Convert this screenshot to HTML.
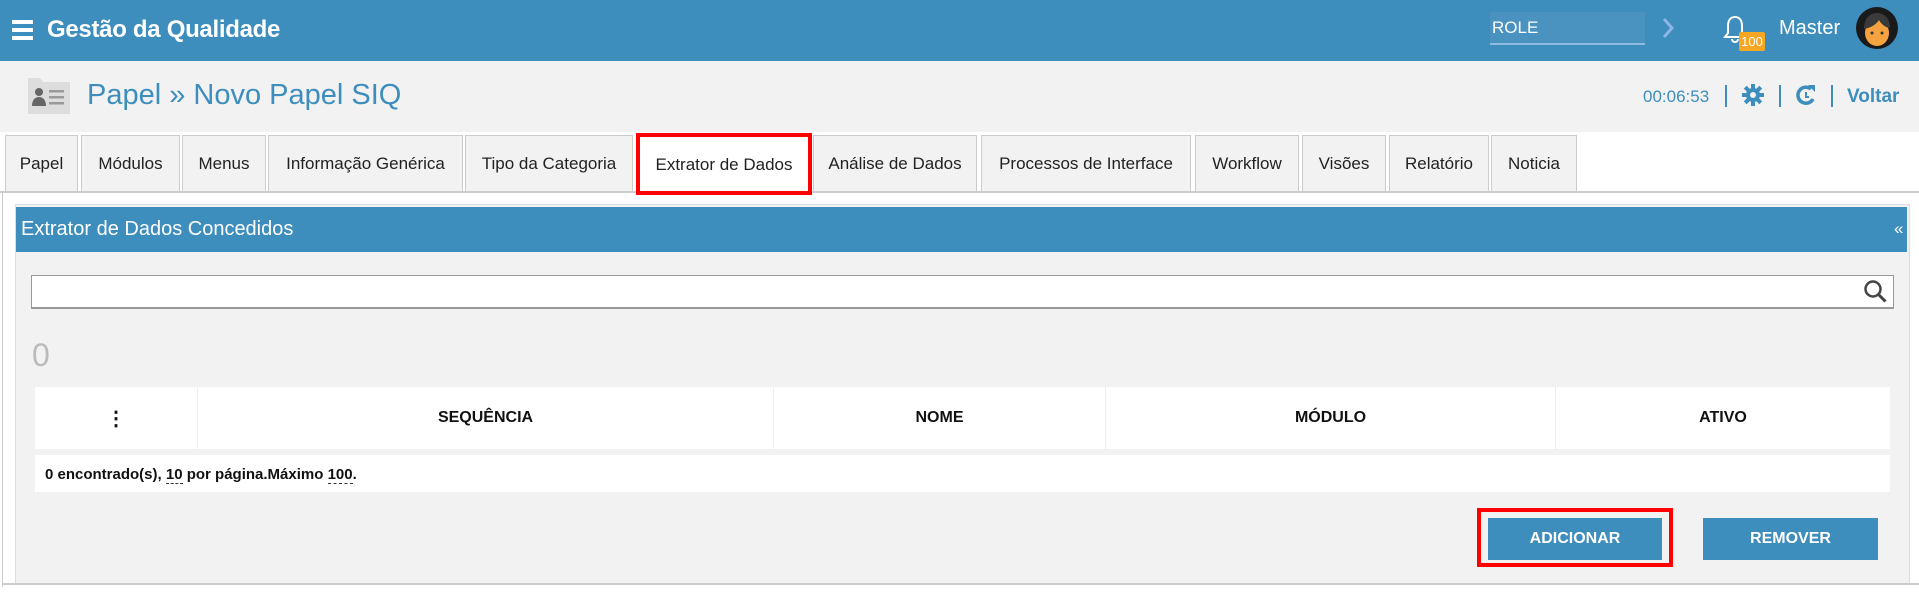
<!DOCTYPE html>
<html><head><meta charset="utf-8"><style>
*{box-sizing:border-box;margin:0;padding:0}
body{width:1919px;height:595px;overflow:hidden;background:#fff;font-family:"Liberation Sans",sans-serif;position:relative}
.a{position:absolute}
.hdr{left:0;top:0;width:1919px;height:61px;background:#3d8dbd}
.sub{left:0;top:61px;width:1919px;height:71px;background:#f2f2f2}
.tab{position:absolute;top:135px;height:57px;background:#f2f2f2;border:1px solid #ccc;border-bottom:none;font-size:17px;color:#222;display:flex;align-items:center;justify-content:center}
.th{position:absolute;top:0;height:62px;display:flex;align-items:center;justify-content:center;font-weight:bold;font-size:16px;color:#111;border-right:1px solid #eee}
.btn{position:absolute;top:518px;height:42px;background:#3d8dbd;color:#fff;font-weight:bold;font-size:16px;display:flex;align-items:center;justify-content:center}
</style></head><body>
<div class="a hdr"></div>
<div class="a" style="left:12px;top:20px;width:21px;height:4px;background:#fff"></div>
<div class="a" style="left:12px;top:28px;width:21px;height:4px;background:#fff"></div>
<div class="a" style="left:12px;top:36px;width:21px;height:4px;background:#fff"></div>
<div class="a" style="left:47px;top:16px;color:#fff;font-weight:bold;font-size:24px;letter-spacing:-0.3px">Gestão da Qualidade</div>
<div class="a" style="left:1490px;top:12px;width:155px;height:33px;background:#4a93c1;border-bottom:2px solid #8cbde0;color:#fff;font-size:17px;padding:6px 2px">ROLE</div>
<svg class="a" style="left:1661px;top:17px" width="14" height="22"><path d="M3 2l8 9-8 9" stroke="#8ab5e6" stroke-width="3" fill="none"/></svg>
<svg class="a" style="left:1722px;top:14px" width="26" height="30"><path d="M13 3c-5 0-7 4-7 9v7l-3 4h20l-3-4v-7c0-5-2-9-7-9z M10 25a3 3 0 0 0 6 0" stroke="#fff" stroke-width="2" fill="none"/></svg>
<div class="a" style="left:1739px;top:32px;width:26px;height:19px;background:#f5a623;color:#fff;font-size:13px;text-align:center;line-height:19px;border-radius:2px">100</div>
<div class="a" style="left:1779px;top:17px;color:#fff;font-size:20px">Master</div>
<svg class="a" style="left:1855px;top:6px" width="44" height="44"><circle cx="22" cy="22" r="21" fill="#1a1a1a"/><ellipse cx="22" cy="27" rx="12" ry="13" fill="#f4a340"/><path d="M9 23c0-11 6-16 13-16s13 5 13 15c-4 0-9-4-11-8-3 5-9 8-15 9z" fill="#3a3a3a"/><circle cx="17" cy="27" r="1.5" fill="#333"/><circle cx="27" cy="27" r="1.5" fill="#333"/></svg>
<div class="a sub"></div>
<svg class="a" style="left:25px;top:76px" width="48" height="40"><path d="M3 2h12l3 4h27v32H3z" fill="#ddd"/><circle cx="14" cy="16" r="4" fill="#666"/><path d="M7 30c0-6 3-9 7-9s7 3 7 9z" fill="#666"/><rect x="24" y="14" width="15" height="2.5" fill="#999"/><rect x="24" y="20" width="15" height="2.5" fill="#999"/><rect x="24" y="26" width="15" height="2.5" fill="#999"/></svg>
<div class="a" style="left:87px;top:79px;color:#3d8dbd;font-size:29px">Papel » Novo Papel SIQ</div>
<div class="a" style="left:1643px;top:87px;color:#3d8dbd;font-size:17px">00:06:53</div>
<div class="a" style="left:1725px;top:85px;width:2px;height:22px;background:#3d8dbd"></div>
<div class="a" style="left:1779px;top:85px;width:2px;height:22px;background:#3d8dbd"></div>
<div class="a" style="left:1831px;top:85px;width:2px;height:22px;background:#3d8dbd"></div>
<svg class="a" style="left:1742px;top:84px" width="22" height="22" viewBox="0 0 22 22"><g fill="#3d8dbd"><circle cx="11" cy="11" r="7"/><rect x="9" y="0" width="4" height="22"/><rect x="0" y="9" width="22" height="4"/><rect x="9" y="0" width="4" height="22" transform="rotate(45 11 11)"/><rect x="9" y="0" width="4" height="22" transform="rotate(-45 11 11)"/></g><circle cx="11" cy="11" r="3" fill="#f2f2f2"/></svg>
<svg class="a" style="left:1795px;top:84px" width="22" height="24"><path d="M16 5a8 8 0 1 0 2 10" stroke="#3d8dbd" stroke-width="3.5" fill="none"/><path d="M13 1h7v7z" fill="#3d8dbd"/><path d="M11 8v5h3" stroke="#3d8dbd" stroke-width="2" fill="none"/></svg>
<div class="a" style="left:1847px;top:86px;color:#3d8dbd;font-size:19px;font-weight:bold">Voltar</div>
<div class="tab" style="left:5px;width:73px">Papel</div>
<div class="tab" style="left:81px;width:99px">Módulos</div>
<div class="tab" style="left:182px;width:84px">Menus</div>
<div class="tab" style="left:268px;width:195px">Informação Genérica</div>
<div class="tab" style="left:465px;width:168px">Tipo da Categoria</div>
<div class="tab" style="left:636px;top:133px;height:62px;width:176px;background:#fff;border:4px solid #f00;align-items:flex-start;padding-top:18px">Extrator de Dados</div>
<div class="tab" style="left:813px;width:164px">Análise de Dados</div>
<div class="tab" style="left:981px;width:210px">Processos de Interface</div>
<div class="tab" style="left:1195px;width:104px">Workflow</div>
<div class="tab" style="left:1302px;width:84px">Visões</div>
<div class="tab" style="left:1389px;width:100px">Relatório</div>
<div class="tab" style="left:1491px;width:86px">Noticia</div>
<div class="a" style="left:0;top:191px;width:636px;height:2px;background:#ccc"></div>
<div class="a" style="left:812px;top:191px;width:1107px;height:2px;background:#ccc"></div>
<div class="a" style="left:2px;top:192px;width:1px;height:395px;background:#ccc"></div>
<div class="a" style="left:15px;top:204px;width:1895px;height:380px;background:#f2f2f2;border:1px solid #ddd"></div>
<div class="a" style="left:3px;top:583px;width:1916px;height:2px;background:#ccc"></div>
<div class="a" style="left:16px;top:207px;width:1891px;height:45px;background:#3d8dbd;color:#fff;font-size:20px;padding:11px 5px">Extrator de Dados Concedidos</div>
<div class="a" style="left:1894px;top:219px;color:#fff;font-size:17px">«</div>
<div class="a" style="left:31px;top:275px;width:1863px;height:34px;background:#fff;border:1px solid #999;border-bottom:2px solid #999"></div>
<svg class="a" style="left:1863px;top:279px" width="26" height="26"><circle cx="10" cy="10" r="7.5" stroke="#444" stroke-width="2.5" fill="none"/><path d="M15.5 15.5l7 7" stroke="#444" stroke-width="3"/></svg>
<div class="a" style="left:32px;top:337px;color:#bbb;font-size:32px">0</div>
<div class="a" style="left:35px;top:387px;width:1855px;height:62px;background:#fff">
<div class="th" style="left:0;width:163px;font-size:20px">⋮</div>
<div class="th" style="left:163px;width:576px">SEQUÊNCIA</div>
<div class="th" style="left:739px;width:332px">NOME</div>
<div class="th" style="left:1071px;width:450px">MÓDULO</div>
<div class="th" style="left:1521px;width:334px;border:none">ATIVO</div>
</div>
<div class="a" style="left:35px;top:455px;width:1855px;height:37px;background:#fff;font-size:15px;font-weight:bold;color:#111;padding:11px 10px">0 encontrado(s), <span style="border-bottom:1px dashed #333">10</span> por página.Máximo <span style="border-bottom:1px dashed #333">100</span>.</div>
<div class="a" style="left:1477px;top:508px;width:196px;height:59px;border:4px solid #f00"></div>
<div class="btn" style="left:1488px;width:174px">ADICIONAR</div>
<div class="btn" style="left:1703px;width:175px">REMOVER</div>
</body></html>
